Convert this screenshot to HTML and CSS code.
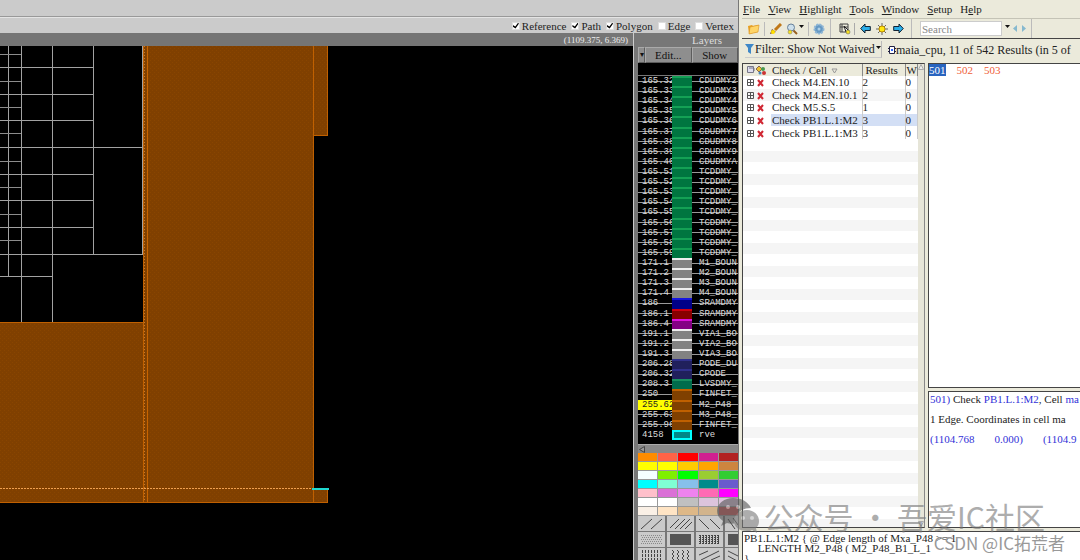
FILE: index.html
```html
<!DOCTYPE html>
<html lang="en">
<head>
<meta charset="utf-8">
<title>Layout viewer and results</title>
<link rel="stylesheet" href="styles.css">
</head>
<body>
<div class="desktop">
  <main class="viewer">
    <div class="blank-bar"></div>
    <form class="snap-bar">
      <label><input type="checkbox" checked>Reference</label>
      <label><input type="checkbox" checked>Path</label>
      <label><input type="checkbox" checked>Polygon</label>
      <label><input type="checkbox">Edge</label>
      <label><input type="checkbox">Vertex</label>
    </form>
    <div class="work">
      <section class="canvas-pane">
        <div class="coords">(1109.375, 6.369)</div>
        <svg class="canvas" aria-label="Layout canvas">
          <defs>
            <pattern id="dots" width="4" height="4" patternUnits="userSpaceOnUse">
              <rect width="4" height="4" fill="#804000"/>
              <path d="M0 0h1v1H0zM2 2h1v1H2z" fill="#894500"/>
            </pattern>
          </defs>
          <g stroke="#a2a2a2" fill="none" shape-rendering="crispEdges">
            <path d="M8.5 0V230M21.5 0V276M52.5 0V276M93.5 0V208M142.5 0V208"/>
            <path d="M0 8.500H21M0 35.500H21M0 61.500H21M0 87.500H21M0 115.500H21M0 141.500H21M0 168.500H21M0 194.500H21" stroke="#8c8c8c"/>
            <path d="M0 21.500H93M0 48.500H93M0 74.500H93M0 128.500H93M0 154.500H93M0 181.500H93M0 101.500H143M0 208.500H143M0 230.500H52"/>
          </g>
          <g fill="url(#dots)" stroke="#c06000" shape-rendering="crispEdges">
            <path d="M-1 276.500H143.500V456.500H-1z"/>
            <path d="M143.500 -1H313.500V456.500H143.500z"/>
            <path d="M313.500 -1H327.500V89.500H313.500zM313.500 442.500H327.500V456.500H313.500z"/>
          </g>
          <path d="M147.500 0V456" stroke="#c86400"/>
          <path d="M144.500 0V456" stroke="#c87828" stroke-dasharray="1 2"/>
          <path d="M0 442.500H313" stroke="#f0a050" stroke-dasharray="2 1"/>
          <path d="M312 443H329" stroke="#20d8d0" stroke-width="2"/>
        </svg>
      </section>
      <aside class="layers">
        <h2>Layers</h2>
        <div class="layer-buttons"><button class="arrow" aria-label="Menu">▾</button><button>Edit...</button><button>Show</button></div>
        <div class="layer-gap"></div>
        <ul class="layer-list">
          <li><span>165.32</span><i class="green"></i><b>CDUDMY2</b></li>
          <li><span>165.33</span><i class="green"></i><b>CDUDMY3</b></li>
          <li><span>165.34</span><i class="green"></i><b>CDUDMY4</b></li>
          <li><span>165.35</span><i class="green"></i><b>CDUDMY5</b></li>
          <li><span>165.36</span><i class="green"></i><b>CDUDMY6</b></li>
          <li><span>165.37</span><i class="green"></i><b>CDUDMY7</b></li>
          <li><span>165.38</span><i class="green"></i><b>CDUDMY8</b></li>
          <li><span>165.39</span><i class="green"></i><b>CDUDMY9</b></li>
          <li><span>165.40</span><i class="green"></i><b>CDUDMYA</b></li>
          <li><span>165.51</span><i class="green"></i><b>TCDDMY_</b></li>
          <li><span>165.52</span><i class="green"></i><b>TCDDMY_</b></li>
          <li><span>165.53</span><i class="green"></i><b>TCDDMY_</b></li>
          <li><span>165.54</span><i class="green"></i><b>TCDDMY_</b></li>
          <li><span>165.55</span><i class="green"></i><b>TCDDMY_</b></li>
          <li><span>165.56</span><i class="green"></i><b>TCDDMY_</b></li>
          <li><span>165.57</span><i class="green"></i><b>TCDDMY_</b></li>
          <li><span>165.58</span><i class="green"></i><b>TCDDMY_</b></li>
          <li><span>165.59</span><i class="green"></i><b>TCDDMY_</b></li>
          <li><span>171.1</span><i class="gray"></i><b>M1_BOUN</b></li>
          <li><span>171.2</span><i class="gray"></i><b>M2_BOUN</b></li>
          <li><span>171.3</span><i class="gray"></i><b>M3_BOUN</b></li>
          <li><span>171.4</span><i class="gray"></i><b>M4_BOUN</b></li>
          <li><span>186</span><i class="blue"></i><b>SRAMDMY</b></li>
          <li><span>186.1</span><i class="red"></i><b>SRAMDMY</b></li>
          <li><span>186.4</span><i class="purple"></i><b>SRAMDMY</b></li>
          <li><span>191.1</span><i class="gray"></i><b>VIA1_BO</b></li>
          <li><span>191.2</span><i class="gray"></i><b>VIA2_BO</b></li>
          <li><span>191.3</span><i class="gray"></i><b>VIA3_BO</b></li>
          <li><span>206.28</span><i class="navy"></i><b>PODE_DU</b></li>
          <li><span>206.32</span><i class="navy"></i><b>CPODE</b></li>
          <li><span>208.3</span><i class="teal"></i><b>LVSDMY_</b></li>
          <li><span>250</span><i class="orange"></i><b>FINFET_</b></li>
          <li class="current"><span>255.62</span><i class="orange"></i><b>M2_P48</b></li>
          <li><span>255.63</span><i class="orange"></i><b>M3_P48_</b></li>
          <li><span>255.96</span><i class="orange"></i><b>FINFET_</b></li>
          <li class="plain"><span>4158</span><i class="cyan"></i><b>rve</b></li>
        </ul>
        <div class="hscroll"><svg width="8" height="7"><path d="M6.500 .5v6L1.500 3.500z" fill="#999" stroke="#444"/></svg></div>
        <div class="palette">
          <i style="background:#ff8c00"></i><i style="background:#ff6347"></i><i style="background:#ff0000"></i><i style="background:#d02090"></i><i style="background:#b22222"></i>
          <i style="background:#ffff00"></i><i style="background:#ffff00"></i><i style="background:#ffcc00"></i><i style="background:#ffa500"></i><i style="background:#cd853f"></i>
          <i style="background:#f5ffff"></i><i style="background:#7ff000"></i><i style="background:#00ff00"></i><i style="background:#9acd32"></i><i style="background:#32cd32"></i>
          <i style="background:#00ffff"></i><i style="background:#7fffd4"></i><i style="background:#87c0eb"></i><i style="background:#008b8b"></i><i style="background:#6a5acd"></i>
          <i style="background:#ffc0cb"></i><i style="background:#da70d6"></i><i style="background:#ee82ee"></i><i style="background:#ff69b4"></i><i style="background:#ff00ff"></i>
          <i style="background:#ffffff"></i><i style="background:#ffffff"></i><i style="background:#c0c0c0"></i><i style="background:#dcc4dc"></i><i style="background:#dcc4dc"></i>
          <i style="background:#faf0e6"></i><i style="background:#ffe4c4"></i><i style="background:#deb887"></i><i style="background:#d2b48c"></i><i style="background:#cd5c5c"></i>
        </div>
        <div class="fills">
          <svg><path d="M3 13L14 3M13 13L24 3"/></svg>
          <svg><path d="M3 12L12 3M8 13L18 3M13 13L23 3M18 13L25 6"/></svg>
          <svg><path d="M3 3L13 13M14 3L24 13"/></svg>
          <svg><path d="M3 3L10 13M8 2L16 13"/></svg>
          <svg class="light"><path d="M3 3.500H24M4 5.500H24M3 7.500H24M4 9.500H24M3 11.500H24" stroke-dasharray="1 1"/></svg>
          <svg><path d="M3 2h21v11H3z" class="solid"/></svg>
          <svg><path d="M3 3.500H24M3 5.500H24M3 7.500H24M3 9.500H24M3 11.500H24" stroke-dasharray="2 1"/><path d="M4 4.500H24M4 6.500H24M4 8.500H24M4 10.500H24" stroke-dasharray="1 2"/></svg>
          <svg><path d="M3 2h21v11H3z" class="solid"/></svg>
          <svg><path d="M4.500 2V15M7.500 2V15M10.500 2V15M13.500 2V15M16.500 2V15M19.500 2V15M22.500 2V15" stroke-dasharray="3 1"/></svg>
          <svg><path d="M5 2l2 2-2 2 2 2-2 2 2 2M10 2l2 2-2 2 2 2-2 2 2 2M15 2l2 2-2 2 2 2-2 2 2 2M20 2l2 2-2 2 2 2-2 2 2 2"/></svg>
          <svg><path d="M3 7L12 3M5 12L23 3M15 12L24 8"/></svg>
          <svg><path d="M3 3L15 9M3 8L14 14"/></svg>
        </div>
      </aside>
    </div>
  </main>

  <section class="results">
    <nav class="menu">
      <button><u>F</u>ile</button><button><u>V</u>iew</button><button><u>H</u>ighlight</button><button><u>T</u>ools</button><button><u>W</u>indow</button><button><u>S</u>etup</button><button>H<u>e</u>lp</button>
    </nav>
    <div class="toolbar">
      <div class="group g-file">
        <button aria-label="Open"><svg width="13" height="12"><path d="M1 3l4-1 1 1 5-1v7l-9 2z" fill="#e8a020"/><path d="M3 4l9-2-1 7-9 2z" fill="#ffd568" stroke="#d89020" stroke-width=".6"/></svg></button>
        <hr>
        <button aria-label="Highlight"><svg width="13" height="12"><path d="M12 1L6 7" stroke="#c07818" stroke-width="3"/><path d="M1 11l2-5 4 3z" fill="#704020"/><circle cx="4" cy="9" r="2" fill="#ffe000"/></svg></button>
        <button aria-label="Find" class="find"><svg width="12" height="12"><path d="M6 6l5 5" stroke="#986020" stroke-width="2"/><circle cx="5" cy="4.500" r="3.500" fill="#cde0ec" stroke="#66809a"/><circle cx="4" cy="9" r="2" fill="#f4df20" stroke="#777" stroke-width=".5"/></svg><svg width="5" height="10"><path d="M0 1h5L2.500 4z" fill="#111"/></svg></button>
        <hr>
        <button aria-label="Settings"><svg width="12" height="12"><circle cx="6" cy="6" r="4.500" fill="#6599c4" stroke="#8fb7d7" stroke-width="2" stroke-dasharray="2 1"/><circle cx="6" cy="6" r="1.500" fill="#afd0e6"/></svg></button>
      </div>
      <div class="group g-nav">
        <button aria-label="Highlight selection" class="pressed"><svg width="12" height="12"><path d="M1 1h8v8H1zM3 1v8M1 4h8" fill="none" stroke="#444"/><path d="M5 3l5 5-3 1z" fill="#fff" stroke="#222"/><circle cx="9" cy="9" r="2" fill="#f6df20" stroke="#555" stroke-width=".5"/></svg></button>
        <button aria-label="Previous"><svg width="11" height="11"><path d="M.7 5.500L5 1v2.500h5.300v4H5V10z" fill="#2aaee8" stroke="#123" /></svg></button>
        <button aria-label="Highlight current"><svg width="12" height="12"><path d="M6 0v12M0 6h12M2 2l8 8M10 2l-8 8" stroke="#666"/><circle cx="6" cy="6" r="3" fill="#ffe811" stroke="#bd8b00"/></svg></button>
        <button aria-label="Next"><svg width="11" height="11"><path d="M10.300 5.500L6 1v2.500H.7v4H6V10z" fill="#2aaee8" stroke="#123"/></svg></button>
      </div>
      <div class="group g-search">
        <input type="text" placeholder="Search" aria-label="Search">
        <svg width="5" height="10"><path d="M0 1h5L2.500 4z" fill="#111"/></svg>
        <svg width="13" height="7"><path d="M4 0v7L0 3.500zM9 0v7l4-3.500z" fill="#86b9cf"/></svg>
      </div>
    </div>
    <div class="filter-row">
      <button class="filter"><svg width="9" height="10"><path d="M0 0h9L6 4v6L3 8V4z" fill="#3f88c8"/></svg>Filter: Show Not Waived<svg width="5" height="8"><path d="M0 1h5L2.500 4z" fill="#111"/></svg></button>
      <div class="summary"><svg width="8" height="8"><path d="M1.500 .5h5v7h-5zM0 2.500h2M0 5.500h2M6 2.500h2M6 5.500h2" fill="#fff" stroke="#224"/><path d="M3 3h2v2H3z" fill="#36f"/></svg>maia_cpu, 11 of 542 Results (in 5 of</div>
    </div>
    <div class="panes">
      <div class="tree">
        <div class="tree-main">
          <table>
            <thead><tr>
              <th class="c-check"><svg width="22" height="10"><path d="M1.500 1.500h6v6h-6zM3 3h5v3" fill="#dde" stroke="#778"/><path d="M10 4l3-3 3 3-3 3z" fill="#eac030" stroke="#865"/><circle cx="17" cy="4" r="2" fill="#4a9a50"/><circle cx="18" cy="8" r="2" fill="#c33"/><circle cx="14" cy="8" r="1.500" fill="#48b"/></svg>Check / Cell <svg width="8" height="8"><path d="M2 2h5L4.500 6z" fill="none" stroke="#999"/></svg></th>
              <th class="c-res">Results</th><th class="c-w">W</th>
            </tr></thead>
            <tbody>
              <tr><td><svg width="22" height="9"><path d="M1.500 1.500h6v6h-6zM2 4.500h5M4.500 2v5" fill="none" stroke="#555"/><path d="M12 2l5 6M17 2l-5 6" stroke="#d02834" stroke-width="2"/></svg><span>Check M4.EN.10</span></td><td>2</td><td>0</td></tr>
              <tr><td><svg width="22" height="9"><path d="M1.500 1.500h6v6h-6zM2 4.500h5M4.500 2v5" fill="none" stroke="#555"/><path d="M12 2l5 6M17 2l-5 6" stroke="#d02834" stroke-width="2"/></svg><span>Check M4.EN.10.1</span></td><td>2</td><td>0</td></tr>
              <tr><td><svg width="22" height="9"><path d="M1.500 1.500h6v6h-6zM2 4.500h5M4.500 2v5" fill="none" stroke="#555"/><path d="M12 2l5 6M17 2l-5 6" stroke="#d02834" stroke-width="2"/></svg><span>Check M5.S.5</span></td><td>1</td><td>0</td></tr>
              <tr class="selected"><td><svg width="22" height="9"><path d="M1.500 1.500h6v6h-6zM2 4.500h5M4.500 2v5" fill="none" stroke="#555"/><path d="M12 2l5 6M17 2l-5 6" stroke="#d02834" stroke-width="2"/></svg><span>Check PB1.L.1:M2</span></td><td>3</td><td>0</td></tr>
              <tr><td><svg width="22" height="9"><path d="M1.500 1.500h6v6h-6zM2 4.500h5M4.500 2v5" fill="none" stroke="#555"/><path d="M12 2l5 6M17 2l-5 6" stroke="#d02834" stroke-width="2"/></svg><span>Check PB1.L.1:M3</span></td><td>3</td><td>0</td></tr>
            </tbody>
          </table>
          <div class="stripes"></div>
        </div>
        <div class="vscroll"><svg width="6" height="6"><path d="M.5 5.500L3 .5l2.500 5z" fill="#eee" stroke="#aaa"/></svg><svg width="6" height="6"><path d="M.5 .5L3 5.500 5.500 .5z" fill="#eee" stroke="#aaa"/></svg></div>
      </div>
      <div class="side">
        <div class="ids"><button class="on">501</button><button>502</button><button>503</button></div>
        <div class="detail">
          <p><a href="#r501">501)</a> Check <a href="#check">PB1.L.1:M2</a>, Cell <a href="#cell">ma</a></p>
          <p>1 Edge. Coordinates in cell ma</p>
          <p class="points"><a href="#p1">(1104.768</a><a href="#p1">0.000)</a><a href="#p2">(1104.9</a></p>
        </div>
      </div>
    </div>
    <pre class="rule">PB1.L.1:M2 { @ Edge length of Mxa_P48 &gt;= 1
     LENGTH M2_P48 ( M2_P48_B1_L_1
}</pre>
  </section>

  <div class="mark-main">
    <svg width="44" height="38"><path d="M17 1C8 1 1 7 1 14c0 4 2 7 6 10l-2 5 6-3c3 1 6 1 9 0-2-8 4-15 15-15C32 5 26 1 17 1z" fill="#555"/><path d="M31 13c-8 0-13 5-13 11s5 10 13 10c2 0 4 0 5-1l5 3-1-5c2-2 3-4 3-7 0-6-5-11-12-11z" fill="#777"/><g fill="#bbb"><circle cx="12" cy="10" r="2"/><circle cx="22" cy="10" r="2"/><circle cx="27" cy="21" r="2"/><circle cx="36" cy="21" r="2"/></g></svg>
    <span>公众号 · 吾爱IC社区</span>
  </div>
  <div class="mark-csdn">CSDN @IC拓荒者</div>
</div>
</body>
</html>
```

FILE: styles.css
```css
* { box-sizing: border-box; }
body {
  margin: 0;
  font: 11px/12px "Liberation Serif", "Noto Sans CJK SC", serif;
  color: #222;
}
button {
  font: inherit;
  color: inherit;
  border: 0;
  padding: 0;
  background: none;
  white-space: nowrap;
}
svg { flex: none; }
.desktop {
  position: relative;
  display: flex;
  height: 100vh;
  overflow: hidden;
  background: #000;
}

/* layout viewer */
.viewer { flex: 1; min-width: 0; display: flex; flex-direction: column; }
.blank-bar { height: 17px; background: #cbcbcb; border-bottom: 1px solid #999; }
.snap-bar {
  height: 16px;
  display: flex;
  justify-content: flex-end;
  align-items: center;
  gap: 6px;
  padding-right: 4px;
  background: #cbcbcb;
  border-top: 1px solid #e4e4e4;
}
.snap-bar label { display: flex; align-items: center; gap: 3px; }
.snap-bar input {
  appearance: none;
  width: 6px;
  height: 6px;
  margin: 0;
  background: #fff;
  outline: 1px solid #ddd;
}
.snap-bar input:checked::before {
  content: "";
  display: block;
  width: 6px;
  height: 6px;
  background: #000;
  clip-path: polygon(0 40%, 40% 65%, 90% 0, 100% 20%, 45% 100%, 0 70%);
}
.work { flex: 1; min-height: 0; display: flex; }
.canvas-pane { flex: 1; min-width: 0; display: flex; flex-direction: column; }
.coords {
  height: 13px;
  padding-right: 5px;
  text-align: right;
  font-size: 9px;
  line-height: 14px;
  color: #eee;
  background: #757575;
}
.canvas { flex: 1; min-height: 0; width: 100%; display: block; background: #000; }

.layers {
  width: 105px;
  display: flex;
  flex-direction: column;
  background: #777;
  border-left: 1px solid #ccc;
  padding-left: 4px;
}
.layers h2 {
  margin: 0;
  padding-right: 16px;
  height: 14px;
  font: 11px/14px "Liberation Serif", serif;
  text-align: right;
  color: #ddd;
}
.layer-buttons { display: flex; height: 16px; }
.layer-buttons button {
  flex: 1;
  background: #8e8e8e;
  border: 1px solid;
  border-color: #aaa #5c5c5c #5c5c5c #aaa;
  color: #111;
}
.layer-buttons .arrow { flex: 0 0 7px; font-size: 8px; }
.layer-gap { height: 13px; background: #000; border-bottom: 1px solid #777; }
.layer-list {
  flex: 1;
  min-height: 0;
  margin: 0;
  padding: 0 0 4px;
  list-style: none;
  display: flex;
  flex-direction: column;
  background: #000;
  color: #ddd;
}
.layer-list li {
  flex: 1;
  min-height: 0;
  display: grid;
  grid-template-columns: 34px 20px 1fr;
  align-items: center;
  font-family: "Liberation Mono", monospace;
  font-size: 9px;
  line-height: 10px;
  background: linear-gradient(#999, #999) center / 100% 1px no-repeat;
}
.layer-list span { padding-left: 4px; white-space: nowrap; }
.layer-list b { padding-left: 7px; font-weight: normal; white-space: nowrap; }
.layer-list i { height: 100%; border-top: 2px solid #14a055; background: #007540; }
.layer-list .gray { background: #828282; border-color: #eee; }
.layer-list .blue { background: #000088; border-color: #1414e0; }
.layer-list .red { background: #880000; border-color: #d00010; }
.layer-list .purple { background: #840084; border-color: #e010e0; }
.layer-list .navy { background: #20205c; border-color: #30308c; }
.layer-list .teal { background: #006c4c; border-color: #189060; }
.layer-list .orange { background: #804000; border-color: #c06000; }
.layer-list .cyan { background: #088; border: 2px solid #0ff; }
.layer-list .current span { background: #ff0; color: #222; }
.layer-list .plain { background: none; }
.hscroll { height: 9px; display: flex; align-items: center; background: #888; border-top: 1px solid #aaa; }
.palette {
  display: grid;
  grid-template-columns: repeat(5, 1fr);
  grid-auto-rows: 8px;
  gap: 1px;
  padding-bottom: 1px;
  background: #999;
}
.fills {
  display: grid;
  grid-template-columns: repeat(4, 27px);
  grid-auto-rows: 15px;
  gap: 1px 2px;
  height: 44px;
  overflow: hidden;
  background: #777;
}
.fills svg { width: 27px; height: 15px; background: #cacaca; fill: none; stroke: #444; }
.fills .light { stroke: #888; }
.fills .solid { fill: #555; stroke: none; }

/* results window */
.results {
  width: 342px;
  display: flex;
  flex-direction: column;
  padding-left: 3px;
  background: #ebeadb;
  border-left: 1px solid #777;
}
.menu { display: flex; gap: 8px; height: 18px; align-items: center; padding-left: 1px; }
.toolbar { display: flex; height: 21px; border-top: 1px solid #c4c3b6; border-bottom: 1px solid #444; }
.group { display: flex; align-items: center; gap: 4px; padding-left: 5px; border-right: 1px solid #bbb; }
.group button { display: flex; align-items: center; }
.group hr { width: 1px; height: 14px; margin: 0; border: 0; background: #bbb; }
.g-file { width: 89px; }
.g-file .find { gap: 1px; }
.g-nav { width: 81px; gap: 5px; padding-left: 8px; }
.g-nav .pressed { padding-right: 3px; border-right: 1px solid #aaa; }
.g-search { width: 120px; gap: 3px; padding-left: 8px; }
.g-search input {
  width: 82px;
  height: 15px;
  border: 1px solid #ccc;
  padding: 0 1px;
  font: inherit;
  background: #fff;
}
.g-search input::placeholder { color: #888; opacity: 1; }
.filter-row { display: flex; align-items: center; gap: 6px; height: 21px; padding-left: 3px; white-space: nowrap; font-size: 12px; }
.summary { display: flex; align-items: center; }
.filter {
  display: flex;
  align-items: center;
  gap: 1px;
  width: 137px;
  height: 17px;
  border-right: 1px solid #bbb;
  border-bottom: 1px solid #ccc;
}
.filter svg:last-child { margin-left: auto; margin-right: 1px; }
.panes { flex: 1; min-height: 0; display: flex; gap: 3px; padding-top: 3px; }
.tree { width: 183px; display: flex; background: #fff; border: 1px solid #444; border-right-color: #888; }
.tree-main { flex: 1; display: flex; flex-direction: column; }
table { width: 100%; height: 75px; border-collapse: collapse; table-layout: fixed; }
th, td { padding: 0; font-weight: normal; text-align: left; white-space: nowrap; line-height: 12px; border-right: 1px solid #ccc; }
th { background: #ebeadb; border-color: #888; padding-left: 3px; }
td:first-child { padding-left: 3px; }
td svg, th svg { vertical-align: -1px; margin-right: 4px; }
th svg:last-child { margin-right: 0; }
td span { display: inline-block; width: 88px; }
.c-check { width: 119px; }
.c-res { width: 43px; }
.c-w { padding-left: 1px; }
tr:nth-child(even) td { background: #f5f5f5; }
tr.selected td { background: #d3dff5; }
tr.selected td:first-child { background: linear-gradient(90deg, #fff 28px, #d3dff5 28px); }
.stripes { flex: 1; background: repeating-linear-gradient(#fff 0 12px, #f5f5f5 12px 23px); }
.vscroll { width: 6px; display: flex; flex-direction: column; justify-content: space-between; background: #e6e5d8; }
.side { flex: 1; min-width: 0; display: flex; flex-direction: column; gap: 3px; }
.ids { flex: 1; display: flex; align-items: flex-start; gap: 11px; background: #fff; border: 1px solid #444; border-right: 0; }
.ids button { color: #ef6038; }
.ids .on { background: #2864c0; color: #fff; }
.detail { height: 137px; background: #fff; border: 1px solid #444; border-right: 0; overflow: hidden; white-space: nowrap; }
.detail p { margin: 0; line-height: 20px; padding: 0 1px; }
.detail p:first-child { line-height: 14px; padding-bottom: 3px; }
.detail a { color: #3232d8; text-decoration: none; }
.points { display: flex; gap: 20px; }
.rule {
  margin: 3px 0 0;
  height: 29px;
  padding: 1px;
  font: 11px/10px "Liberation Serif", serif;
  background: #fff;
  border: 1px solid #444;
  border-width: 1px 0 0 1px;
  overflow: hidden;
}

/* watermarks over the windows */
.mark-main {
  position: absolute;
  right: 35px;
  bottom: 24px;
  display: flex;
  align-items: center;
  gap: 4px;
  font: 30px/40px "Noto Sans CJK SC", sans-serif;
  color: #777;
  opacity: .6;
  white-space: nowrap;
}
.mark-csdn {
  position: absolute;
  right: 15px;
  bottom: 5px;
  font: 17px/24px "Noto Sans CJK SC", sans-serif;
  color: #999;
  white-space: nowrap;
}
```
